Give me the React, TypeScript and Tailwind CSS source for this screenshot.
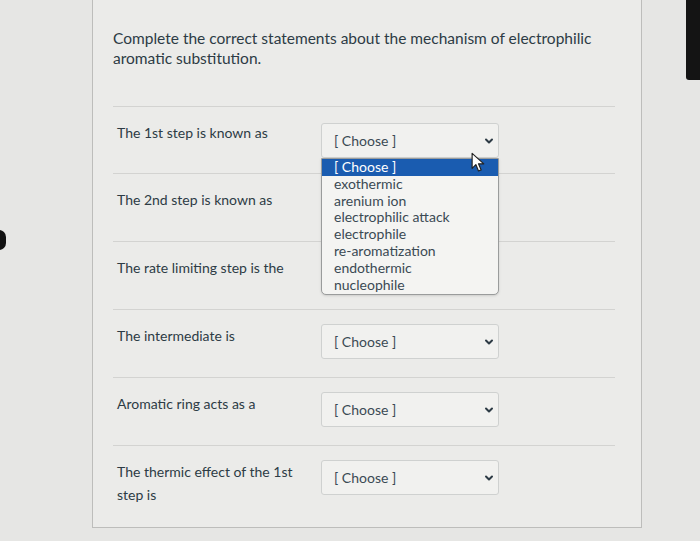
import React from "react";

const rows = [
  { label: "The 1st step is known as", open: true },
  { label: "The 2nd step is known as", hidden: true },
  { label: "The rate limiting step is the", hidden: true },
  { label: "The intermediate is" },
  { label: "Aromatic ring acts as a" },
  { label: "The thermic effect of the 1st step is" },
];

const options = [
  "[ Choose ]",
  "exothermic",
  "arenium ion",
  "electrophilic attack",
  "electrophile",
  "re-aromatization",
  "endothermic",
  "nucleophile",
];

function Chevron() {
  return (
    <svg width="10" height="10" viewBox="0 0 10 10" className="text-[#2d3b45]">
      <path d="M2 3.5 L5 6.5 L8 3.5" fill="none" stroke="currentColor" strokeWidth="2" strokeLinecap="round" strokeLinejoin="round" />
    </svg>
  );
}

function SelectBox({ open }: { open?: boolean }) {
  return (
    <div className="relative">
      <div className="flex h-[35px] w-[178px] items-center justify-between rounded-[3px] border border-[#cfd1d0] bg-[#f1f1ef] pl-[12px] pr-[4px] text-[14px] text-[#3b4a54]">
        <span>[ Choose ]</span>
        <Chevron />
      </div>
      {open && (
        <div className="absolute left-0 top-[35px] z-10 w-[178px] rounded-b-[5px] border border-[#9a9c9c] bg-[#f4f4f2] pb-[1px] text-[14px] leading-[16.8px] text-[#3b4a54] shadow-sm">
          {options.map((o, i) => (
            <div key={o} className={i === 0 ? "bg-[#1a5cb0] pl-[12px] text-white" : "pl-[12px]"}>
              {o}
            </div>
          ))}
        </div>
      )}
      {open && (
        <svg className="absolute left-[149px] top-[29px] z-20" width="17" height="22" viewBox="0 0 16 20">
          <path d="M2 1 L2 15 L5.5 11.5 L8 17.5 L10.5 16.5 L8 10.8 L13 10.8 Z" fill="#ffffff" stroke="#222" strokeWidth="1.1" strokeLinejoin="round" />
        </svg>
      )}
    </div>
  );
}

export default function App() {
  return (
    <div className="relative h-[541px] w-[700px] overflow-hidden bg-[#e6e6e4]" style={{ fontFamily: "Lato, 'Open Sans', sans-serif" }}>
      <div className="absolute left-[-8px] top-[230px] h-[20px] w-[14px] rounded-full bg-[#111]" />
      <div className="absolute right-0 top-0 h-[80px] w-[14px] rounded-bl-[3px] bg-[#141414]" />
      <div className="ml-[92px] h-[528px] w-[550px] border-b border-l border-r border-[#bdbdbb] bg-[#ebebe9] pl-[20px] pr-[26px]">
        <p className="pt-[28px] text-[15.5px] leading-[20px] text-[#2d3b45]">
          Complete the correct statements about the mechanism of electrophilic aromatic substitution.
        </p>
        <div className="mt-[38px]">
          {rows.map((r, i) => (
            <div key={r.label} className={i === 0 ? "flex h-[67px] border-t border-[#d3d3d1]" : "flex h-[68px] border-t border-[#d3d3d1]"}>
              <div className="w-[208px] pl-[4px] pt-[14px] pr-[20px] text-[14px] leading-[23px] text-[#2d3b45]">{r.label}</div>
              <div className={i === 0 ? "pt-[16px]" : "pt-[14px]"}>{r.hidden ? null : <SelectBox open={r.open} />}</div>
            </div>
          ))}
        </div>
      </div>
    </div>
  );
}
